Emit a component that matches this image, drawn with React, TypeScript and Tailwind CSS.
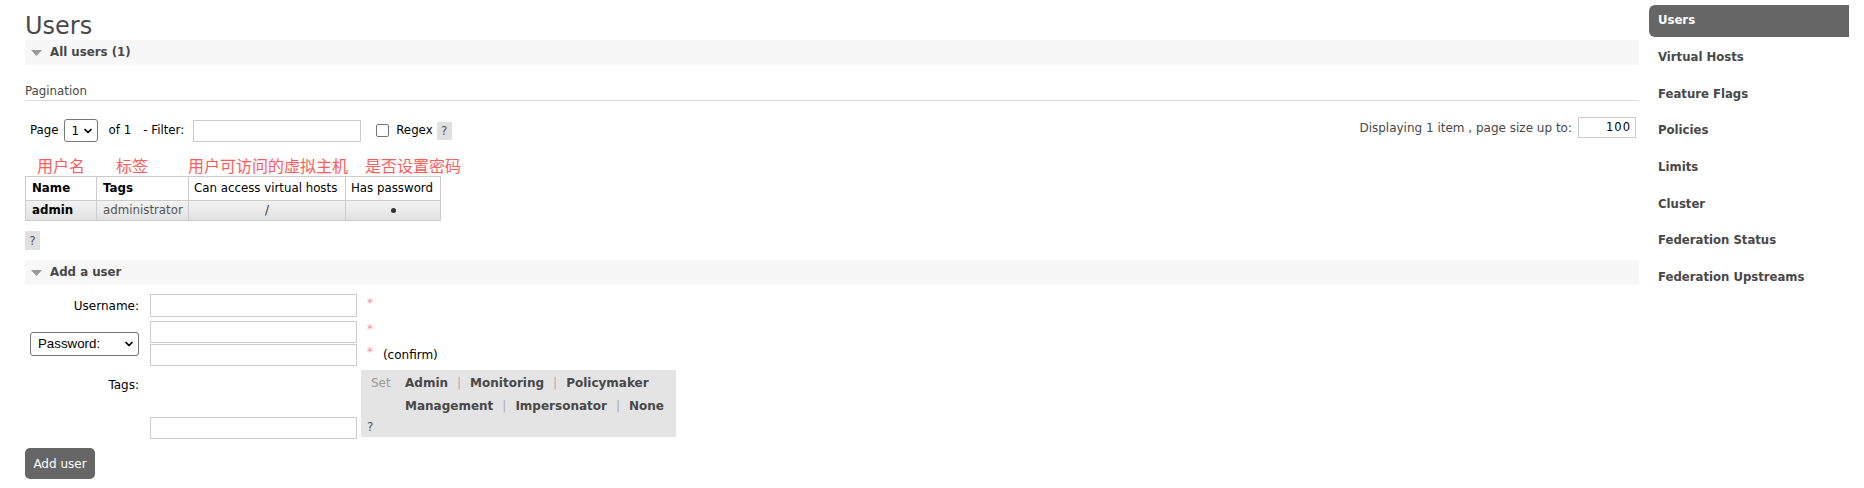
import React from 'react';
import { ChevronDown } from 'lucide-react';

const navItems = [
  'Users',
  'Virtual Hosts',
  'Feature Flags',
  'Policies',
  'Limits',
  'Cluster',
  'Federation Status',
  'Federation Upstreams',
];

const SectionBar: React.FC<{ title: string }> = ({ title }) => (
  <div className="h-[25px] bg-[#f7f7f7] flex items-center">
    <svg width="11" height="6" viewBox="0 0 11 6" className="ml-[6px]">
      <polygon points="0,0 11,0 5.5,6" fill="#999" />
    </svg>
    <span className="ml-[8px] font-bold text-[11.8px] text-[#484848]">{title}</span>
  </div>
);

const FakeSelect: React.FC<{ label: string; className: string }> = ({ label, className }) => (
  <div className={`border border-[#767676] rounded-[3px] bg-white flex items-center justify-between pl-[7px] pr-[3px] text-black ${className}`}>
    <span>{label}</span>
    <ChevronDown size={12} strokeWidth={3.5} className="text-black" />
  </div>
);

const HelpBox: React.FC<{ className?: string }> = ({ className = '' }) => (
  <div className={`bg-[#e0e0e0] text-[#555] text-[12px] flex items-center justify-center ${className}`}>?</div>
);

const Sep = () => <span className="mx-[9px] font-normal text-[#aaa]">|</span>;

export default function App() {
  return (
    <div className="flex w-[1864px] h-[488px] bg-white overflow-hidden font-['DejaVu_Sans',Verdana,sans-serif] text-[#484848] text-[11.8px]">
      {/* Main */}
      <main className="ml-[25px] w-[1614px] shrink-0">
        <h1 className="mt-[12px] h-[28px] leading-[28px] text-[24px] font-normal text-[#4a4a4a]">Users</h1>

        <SectionBar title="All users (1)" />

        <div className="mt-[17px] h-[19px] leading-[18px] border-b border-[#ddd]">Pagination</div>

        <div className="mt-[18px] h-[23px] flex justify-between">
          <div className="flex items-center h-[23px]">
            <span className="ml-[5px] text-black">Page</span>
            <FakeSelect label="1" className="ml-[5px] w-[34px] h-[23px] text-[12px]" />
            <span className="ml-[11px] text-black">of 1</span>
            <span className="ml-[12px] text-black">- Filter:</span>
            <div className="ml-[9px] w-[168px] h-[22px] border border-[#ccc]" />
            <div className="ml-[15px] w-[13px] h-[13px] border border-[#767676] rounded-[2px]" />
            <span className="ml-[7px] text-black">Regex</span>
            <HelpBox className="ml-[4px] w-[15px] h-[18px]" />
          </div>
          <div className="flex items-center h-[21px] -mt-[2px] mr-[3px]">
            <span className="text-[12px] text-[#484848]">Displaying 1 item , page size up to:</span>
            <div className="ml-[6px] w-[58px] h-[21px] border border-[#ccc] flex items-center justify-end pr-[4px] text-[11.5px] tracking-[1px] text-black">
              100
            </div>
          </div>
        </div>

        <div className="mt-[11px] h-[23px] flex items-center font-['Noto_Sans_CJK_SC',sans-serif] text-[16px] text-[#ff5b5b]">
          <span className="ml-[12px]">用户名</span>
          <span className="ml-[31px]">标签</span>
          <span className="ml-[40px]">用户可访问的虚拟主机</span>
          <span className="ml-[17px]">是否设置密码</span>
        </div>

        <div className="h-[45px]">
          <table className="table-fixed border-collapse w-[415px] text-black">
            <colgroup>
              <col className="w-[71px]" />
              <col className="w-[92px]" />
              <col className="w-[157px]" />
              <col className="w-[95px]" />
            </colgroup>
            <thead>
              <tr className="h-[24px] bg-white">
                <th className="border border-[#ccc] p-0 pl-[6px] text-left font-bold">Name</th>
                <th className="border border-[#ccc] p-0 pl-[6px] text-left font-bold">Tags</th>
                <th className="border border-[#ccc] p-0 pl-[5px] text-left font-normal whitespace-nowrap">Can access virtual hosts</th>
                <th className="border border-[#ccc] p-0 pl-[5px] text-left font-normal whitespace-nowrap">Has password</th>
              </tr>
            </thead>
            <tbody>
              <tr className="h-[20px] bg-gradient-to-b from-[#f3f3f3] to-[#e1e1e1]">
                <td className="border border-[#ccc] p-0 pl-[6px] font-bold">admin</td>
                <td className="border border-[#ccc] p-0 pl-[6px] text-[#555]">administrator</td>
                <td className="border border-[#ccc] p-0 text-center text-[#333]">/</td>
                <td className="border border-[#ccc] p-0 text-center text-[#333]">
                  <span className="inline-block w-[5px] h-[5px] rounded-full bg-[#333] align-middle" />
                </td>
              </tr>
            </tbody>
          </table>
        </div>

        <HelpBox className="mt-[10px] w-[15px] h-[19px]" />

        <div className="mt-[10px]">
          <SectionBar title="Add a user" />
        </div>

        {/* Add user form */}
        <div className="mt-[9px] flex items-center h-[23px]">
          <span className="w-[114px] text-right text-[12px] text-black">Username:</span>
          <div className="ml-[11px] w-[207px] h-[23px] border border-[#ccc]" />
          <span className="ml-[10px] self-start mt-[1px] text-[#ff8f8f]">*</span>
        </div>

        <div className="mt-[4px] h-[45px] flex">
          <div className="w-[114px] flex items-center justify-end">
            <FakeSelect label="Password:" className="w-[109px] h-[24px] text-[13.3px] font-['Liberation_Sans',Arial,sans-serif]" />
          </div>
          <div className="ml-[11px] w-[207px] flex flex-col">
            <div className="h-[22px] border border-[#ccc]" />
            <div className="mt-px h-[22px] border border-[#ccc]" />
          </div>
          <div className="ml-[10px] flex flex-col">
            <span className="h-[23px] leading-[16px] text-[#ff8f8f]">*</span>
            <div className="flex h-[22px]">
              <span className="leading-[16px] text-[#ff8f8f]">*</span>
              <span className="ml-[10px] leading-[22px] text-[12px] text-black">(confirm)</span>
            </div>
          </div>
        </div>

        <div className="mt-[4px] h-[69px] flex">
          <span className="w-[114px] text-right pt-[6px] leading-[18px] text-[12px] text-black">Tags:</span>
          <div className="ml-[11px] w-[207px] h-[69px] flex items-end">
            <div className="w-[207px] h-[22px] border border-[#ccc]" />
          </div>
          <div className="ml-[4px] w-[315px] h-[67px] bg-[#e4e4e4] flex flex-col pt-[1px] text-[12px]">
            <div className="h-[23px] flex items-center pl-[10px]">
              <span className="w-[34px] text-[#999]">Set</span>
              <span className="font-bold text-[#484848]">Admin</span>
              <Sep />
              <span className="font-bold text-[#484848]">Monitoring</span>
              <Sep />
              <span className="font-bold text-[#484848]">Policymaker</span>
            </div>
            <div className="h-[23px] flex items-center pl-[44px]">
              <span className="font-bold text-[#484848]">Management</span>
              <Sep />
              <span className="font-bold text-[#484848]">Impersonator</span>
              <Sep />
              <span className="font-bold text-[#484848]">None</span>
            </div>
            <div className="h-[19px] flex items-center pl-[6px] text-[#555]">?</div>
          </div>
        </div>

        <button className="mt-[9px] w-[70px] h-[31px] rounded-[5px] bg-[#666] text-white text-[12px] flex items-center justify-center">
          Add user
        </button>
      </main>

      {/* Right nav */}
      <nav className="ml-[10px] mt-[5px] w-[200px] shrink-0">
        <ul className="flex flex-col gap-[4.7px]">
          {navItems.map((item, i) => (
            <li
              key={item}
              className={`h-[32px] flex items-center pl-[9px] font-bold text-[11.7px] ${i === 0 ? 'bg-[#666] text-white rounded-l-[6px]' : 'text-[#484848]'}`}
            >
              {item}
            </li>
          ))}
        </ul>
      </nav>
    </div>
  );
}
